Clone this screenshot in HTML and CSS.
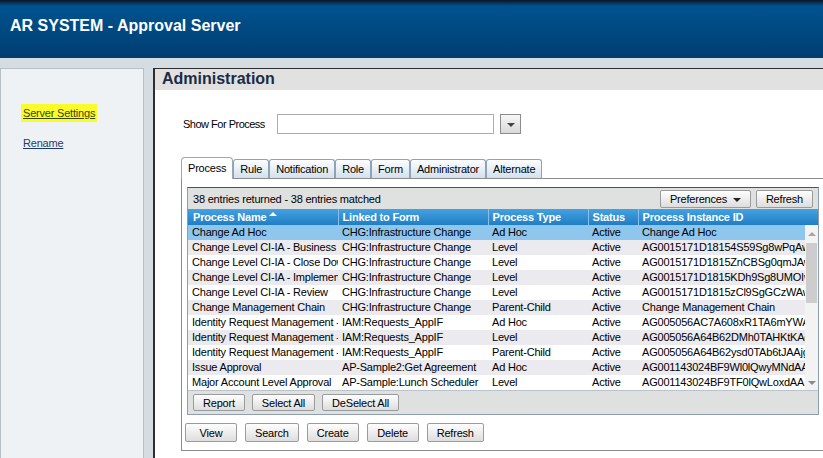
FILE: index.html
```html
<!DOCTYPE html>
<html lang="en">
<head>
    <meta charset="UTF-8">
    <meta name="viewport" content="width=device-width, initial-scale=1.0">
    <title>AR SYSTEM - Approval Server</title>
    <link rel="stylesheet" href="styles.css">
</head>
<body>
    <div class="top-bar">
        <h1>AR SYSTEM - Approval Server</h1>
    </div>

    <div class="workspace">
        <div class="side-nav">
            <a href="#" class="current">Server Settings</a>
            <a href="#">Rename</a>
        </div>

        <div class="main-panel">
            <h2 class="panel-title">Administration</h2>

            <div class="panel-body">
                <div class="process-filter">
                    <label for="process-filter">Show For Process</label>
                    <input type="text" id="process-filter">
                    <button class="dropdown-btn" type="button"><span class="caret"></span></button>
                </div>

                <div class="tabs">
                    <span class="tab active">Process</span>
                    <span class="tab">Rule</span>
                    <span class="tab">Notification</span>
                    <span class="tab">Role</span>
                    <span class="tab">Form</span>
                    <span class="tab">Administrator</span>
                    <span class="tab">Alternate</span>
                </div>

                <div class="tab-content">
                    <div class="grid">
                        <div class="grid-toolbar">
                            <span class="count">38 entries returned - 38 entries matched</span>
                            <button class="btn" type="button">Preferences <span class="caret"></span></button>
                            <button class="btn" type="button">Refresh</button>
                        </div>

                        <table class="grid-head">
                            <colgroup>
                                <col style="width: 150px">
                                <col style="width: 150px">
                                <col style="width: 100px">
                                <col style="width: 50px">
                                <col style="width: 180px">
                            </colgroup>
                            <tr>
                                <th>Process Name <span class="sort-up"></span></th>
                                <th>Linked to Form</th>
                                <th>Process Type</th>
                                <th>Status</th>
                                <th>Process Instance ID</th>
                            </tr>
                        </table>

                        <div class="grid-body">
                            <table class="grid-rows">
                                <colgroup>
                                    <col style="width: 150px">
                                    <col style="width: 150px">
                                    <col style="width: 100px">
                                    <col style="width: 50px">
                                    <col style="width: 167px">
                                </colgroup>
                                <tr class="selected">
                                    <td>Change Ad Hoc</td>
                                    <td>CHG:Infrastructure Change</td>
                                    <td>Ad Hoc</td>
                                    <td>Active</td>
                                    <td>Change Ad Hoc</td>
                                </tr>
                                <tr class="alt">
                                    <td>Change Level CI-IA - Business Approval</td>
                                    <td>CHG:Infrastructure Change</td>
                                    <td>Level</td>
                                    <td>Active</td>
                                    <td>AG0015171D18154S59Sg8wPqAwRQ</td>
                                </tr>
                                <tr>
                                    <td>Change Level CI-IA - Close Down</td>
                                    <td>CHG:Infrastructure Change</td>
                                    <td>Level</td>
                                    <td>Active</td>
                                    <td>AG0015171D1815ZnCBSg0qmJAwRQ</td>
                                </tr>
                                <tr class="alt">
                                    <td>Change Level CI-IA - Implementation</td>
                                    <td>CHG:Infrastructure Change</td>
                                    <td>Level</td>
                                    <td>Active</td>
                                    <td>AG0015171D1815KDh9Sg8UMOIwRQ</td>
                                </tr>
                                <tr>
                                    <td>Change Level CI-IA - Review</td>
                                    <td>CHG:Infrastructure Change</td>
                                    <td>Level</td>
                                    <td>Active</td>
                                    <td>AG0015171D1815zCl9SgGCzWAwRQ</td>
                                </tr>
                                <tr class="alt">
                                    <td>Change Management Chain</td>
                                    <td>CHG:Infrastructure Change</td>
                                    <td>Parent-Child</td>
                                    <td>Active</td>
                                    <td>Change Management Chain</td>
                                </tr>
                                <tr>
                                    <td>Identity Request Management - Ad Hoc</td>
                                    <td>IAM:Requests_AppIF</td>
                                    <td>Ad Hoc</td>
                                    <td>Active</td>
                                    <td>AG005056AC7A608xR1TA6mYWAg</td>
                                </tr>
                                <tr class="alt">
                                    <td>Identity Request Management - Level</td>
                                    <td>IAM:Requests_AppIF</td>
                                    <td>Level</td>
                                    <td>Active</td>
                                    <td>AG005056A64B62DMh0TAHKtKAg</td>
                                </tr>
                                <tr>
                                    <td>Identity Request Management - Chain</td>
                                    <td>IAM:Requests_AppIF</td>
                                    <td>Parent-Child</td>
                                    <td>Active</td>
                                    <td>AG005056A64B62ysd0TAb6tJAAjg</td>
                                </tr>
                                <tr class="alt">
                                    <td>Issue Approval</td>
                                    <td>AP-Sample2:Get Agreement</td>
                                    <td>Ad Hoc</td>
                                    <td>Active</td>
                                    <td>AG001143024BF9Wl0lQwyMNdAA</td>
                                </tr>
                                <tr>
                                    <td>Major Account Level Approval</td>
                                    <td>AP-Sample:Lunch Scheduler</td>
                                    <td>Level</td>
                                    <td>Active</td>
                                    <td>AG001143024BF9TF0lQwLoxdAA</td>
                                </tr>
                            </table>

                            <div class="scrollbar">
                                <span class="arrow-up"></span>
                                <span class="thumb"></span>
                                <span class="arrow-down"></span>
                            </div>
                        </div>

                        <div class="grid-footer">
                            <button class="btn" type="button">Report</button>
                            <button class="btn" type="button">Select All</button>
                            <button class="btn" type="button">DeSelect All</button>
                        </div>
                    </div>

                    <div class="actions">
                        <button class="btn" type="button">View</button>
                        <button class="btn" type="button">Search</button>
                        <button class="btn" type="button">Create</button>
                        <button class="btn" type="button">Delete</button>
                        <button class="btn" type="button">Refresh</button>
                    </div>
                </div>
            </div>
        </div>
    </div>
</body>
</html>
```

FILE: styles.css
```css
html, body {
    height: 458px;
    overflow: hidden;
}

body {
    margin: 0;
    font-family: "Liberation Sans", Arial, sans-serif;
    font-size: 11px;
    letter-spacing: -0.2px;
    color: #000;
    background-color: #d5dde3;
}

/* naglowek */
.top-bar {
    height: 58px;
    background: linear-gradient(to bottom, #0b1626 0, #08335e 3px, #00538f 6px, #003e71 100%);
}

.top-bar h1 {
    margin: 0;
    padding: 17px 10px 0;
    font-size: 16px;
    line-height: 18px;
    letter-spacing: 0;
    color: #fff;
}

.workspace {
    display: flex;
    gap: 9px;
    height: 390px;
    padding-top: 10px;
}

/* menu po lewej */
.side-nav {
    flex: none;
    width: 144px;
    box-sizing: border-box;
    display: flex;
    flex-direction: column;
    align-items: flex-start;
    gap: 12px;
    padding: 35px 0 0 20px;
    background-color: #eff2f5;
    border: 1px solid #b7c0c7;
    border-bottom: none;
}

.side-nav a {
    padding: 2px;
    line-height: 14px;
    color: #1f3b6d;
    text-decoration: underline;
}

.side-nav a.current {
    background-color: #fbfb2a;
    color: #34470f;
}

/* glowny panel */
.main-panel {
    flex: none;
    width: 720px;
    background-color: #fff;
    border-left: 2px solid #2e2e2e;
    border-top: 1px solid #2e2e2e;
}

.panel-title {
    margin: 0;
    height: 21px;
    padding-left: 7px;
    font-size: 16px;
    line-height: 20px;
    letter-spacing: 0;
    color: #1a2c45;
    background-color: #e1e1e1;
}

.panel-body {
    padding: 24px 0 0 26px;
}

.process-filter {
    display: flex;
    align-items: center;
    height: 20px;
    margin-left: 2px;
}

.process-filter label {
    width: 94px;
    letter-spacing: -0.5px;
}

.process-filter input {
    width: 217px;
    height: 20px;
    box-sizing: border-box;
    margin: 0;
    padding: 0 3px;
    border: 1px solid #abadb3;
}

.dropdown-btn {
    width: 21px;
    height: 20px;
    margin-left: 6px;
    padding: 0;
    border: 1px solid #8c8c8c;
    background: linear-gradient(#f7f7f7, #d9d9d9);
}

.dropdown-btn .caret {
    margin: 0;
    border-top-color: #444;
}

.caret {
    display: inline-block;
    width: 0;
    height: 0;
    margin-left: 3px;
    vertical-align: middle;
    border-left: 4px solid transparent;
    border-right: 4px solid transparent;
    border-top: 4px solid #222;
}

/* zakladki */
.tabs {
    display: flex;
    align-items: flex-end;
    margin-top: 23px;
}

.tab {
    height: 19px;
    box-sizing: border-box;
    padding: 0 6px;
    line-height: 18px;
    border: 1px solid #8fa3b6;
    border-bottom: none;
    border-radius: 3px 3px 0 0;
    background: linear-gradient(#fdfeff, #d3e0ec);
}

.tab.active {
    position: relative;
    z-index: 1;
    height: 22px;
    margin-bottom: -1px;
    line-height: 20px;
    border-color: #9aa8b4;
    border-radius: 4px 4px 0 0;
    background: #fff;
}

.tab-content {
    padding: 8px 0 8px 3px;
    border: 1px solid #8c8c8c;
    border-right: none;
}

/* tabela */
.grid {
    width: 632px;
    box-sizing: border-box;
    margin-left: 2px;
    border: 1px solid #8e9eae;
    border-top-color: #33597f;
}

.grid-toolbar {
    display: flex;
    align-items: center;
    gap: 5px;
    height: 21px;
    padding: 0 5px;
    background-color: #dfe1e1;
}

.grid-toolbar .count {
    flex: 1;
}

.grid-head,
.grid-rows {
    table-layout: fixed;
    border-collapse: collapse;
    border-spacing: 0;
}

.grid-head {
    width: 630px;
    background: linear-gradient(#44a2e2, #1f7dc3);
}

.grid-head th {
    height: 16px;
    padding: 0 4px;
    text-align: left;
    white-space: nowrap;
    overflow: hidden;
    color: #fff;
    border-left: 1px solid #86c0e8;
}

.grid-head th:first-child {
    padding-left: 5px;
    border-left: none;
}

.sort-up {
    display: inline-block;
    width: 0;
    height: 0;
    vertical-align: 5px;
    border-left: 4px solid transparent;
    border-right: 4px solid transparent;
    border-bottom: 4px solid #fff;
}

.grid-body {
    display: flex;
    background-color: #fff;
}

.grid-rows {
    width: 617px;
}

.grid-rows td {
    height: 15px;
    padding: 0 4px;
    line-height: 15px;
    white-space: nowrap;
    overflow: hidden;
}

.grid-rows tr.alt td {
    background-color: #ebeaef;
}

.grid-rows tr.selected td {
    background-color: #8ec6ee;
}

.scrollbar {
    width: 13px;
    display: flex;
    flex-direction: column;
    align-items: center;
    padding: 7px 0 5px;
    box-sizing: border-box;
    background-color: #f3f3f3;
}

.arrow-up,
.arrow-down {
    width: 0;
    height: 0;
    border-left: 4px solid transparent;
    border-right: 4px solid transparent;
}

.arrow-up {
    border-bottom: 4px solid #a6a6a6;
}

.arrow-down {
    margin-top: auto;
    border-top: 4px solid #8a8a8a;
}

.thumb {
    width: 11px;
    height: 60px;
    margin-top: 7px;
    background-color: #cdcdcd;
}

.grid-footer {
    display: flex;
    align-items: center;
    gap: 7px;
    height: 24px;
    box-sizing: border-box;
    padding-left: 5px;
    background-color: #dfe1e1;
    border-top: 1px solid #b9c3cc;
}

/* przyciski */
.btn {
    height: 18px;
    padding: 0 9px;
    font-family: "Liberation Sans", Arial, sans-serif;
    font-size: 11px;
    letter-spacing: -0.2px;
    color: #000;
    border: 1px solid #9b9b9b;
    border-radius: 2px;
    background: linear-gradient(#fefefe, #dddddd);
}

.grid-footer .btn {
    height: 17px;
}

.actions {
    display: flex;
    gap: 8px;
    margin-top: 8px;
}

.actions .btn {
    min-width: 52px;
    height: 19px;
}
```
